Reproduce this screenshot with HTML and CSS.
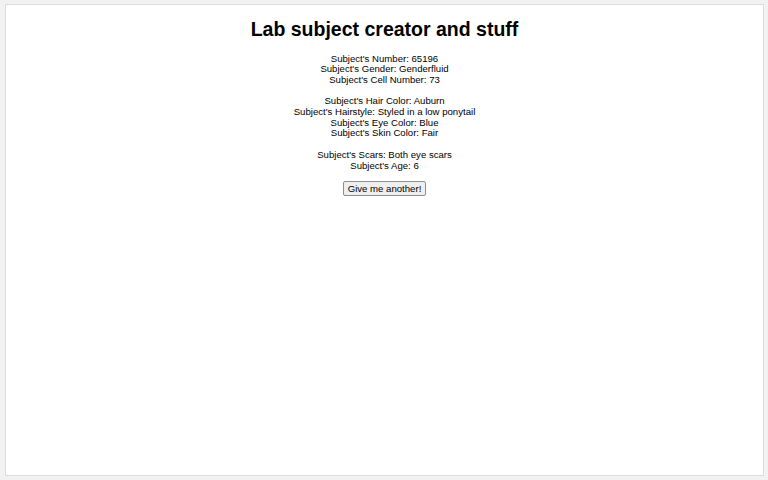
FILE: index.html
```html
<!DOCTYPE html>
<html lang="en">
<head>
  <meta charset="UTF-8" />
  <title>Lab subject creator and stuff</title>
  <link rel="stylesheet" href="styles.css">
</head>
<body>
  <div class="page">
    <h1>Lab subject creator and stuff</h1>

    <div class="group">
      <div>Subject's Number: <span id="number">65196</span></div>
      <div>Subject's Gender: <span id="gender">Genderfluid</span></div>
      <div>Subject's Cell Number: <span id="cell">73</span></div>
    </div>

    <div class="group">
      <div>Subject's Hair Color: <span id="hairColor">Auburn</span></div>
      <div>Subject's Hairstyle: <span id="hairstyle">Styled in a low ponytail</span></div>
      <div>Subject's Eye Color: <span id="eyeColor">Blue</span></div>
      <div>Subject's Skin Color: <span id="skin">Fair</span></div>
    </div>

    <div class="group last">
      <div>Subject's Scars: <span id="scars">Both eye scars</span></div>
      <div>Subject's Age: <span id="age">6</span></div>
    </div>

    <button type="button" class="again">Give me another!</button>
  </div>
</body>
</html>
```

FILE: styles.css
```css
* {
  box-sizing: border-box;
}

html, body {
  height: 100%;
  margin: 0;
}

body {
  background: #f2f2f2;
  padding: 4px 4px 4px 5px;
  font-family: "Liberation Sans", Arial, sans-serif;
  color: #000;
}

.page {
  height: 472px;
  background: #fff;
  border: 1px solid #dcdcdc;
  text-align: center;
  font-size: 9.6px;
  line-height: 10.7px;
  padding-top: 13px;
}

h1 {
  margin: 0 0 13.5px;
  font-size: 19.5px;
  line-height: 22px;
  font-weight: bold;
}

.group {
  margin-bottom: 10.7px;
}

.group.last {
  margin-bottom: 9.5px;
}

.again {
  font-family: "Liberation Sans", Arial, sans-serif;
  font-size: 9.6px;
  line-height: 11px;
  padding: 1px 4px;
  background: #efefef;
  border: 1px solid #8f8f8f;
  border-radius: 2px;
  color: #000;
}
```
